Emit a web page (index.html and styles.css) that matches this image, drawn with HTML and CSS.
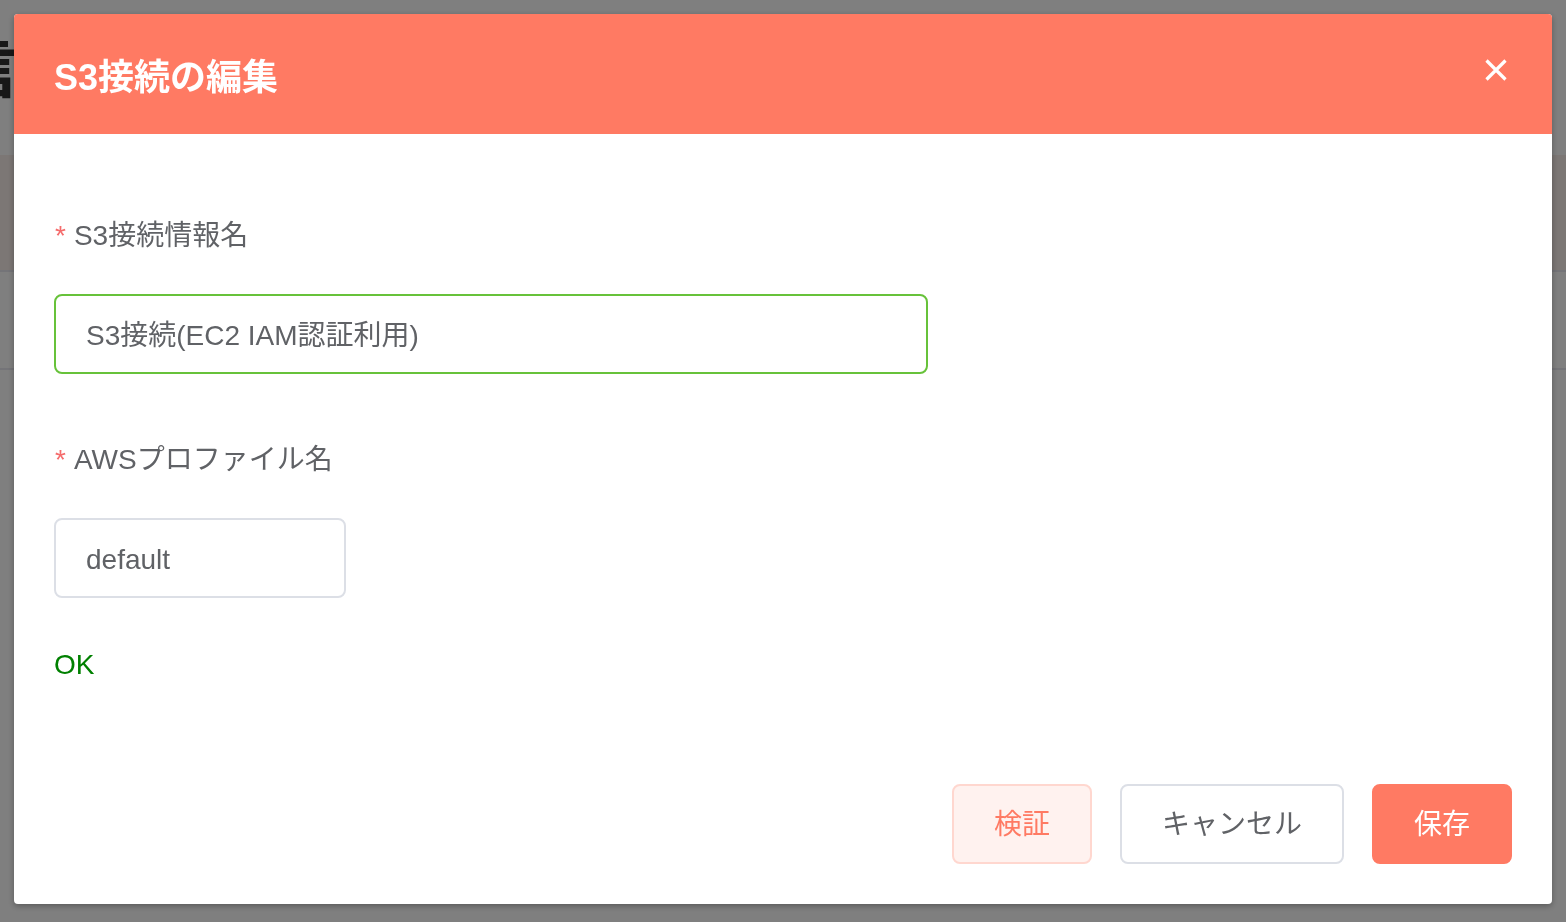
FILE: index.html
```html
<!DOCTYPE html>
<html lang="ja">
<head>
<meta charset="utf-8">
<title>S3接続の編集</title>
<link rel="stylesheet" href="styles.css">
</head>
<body>
<div class="page">
  <div class="page-top"><span class="page-glyph">言</span></div>
  <div class="page-band"></div>
  <div class="page-row"></div>
</div>
<div class="overlay">
  <div class="dialog">
    <div class="dialog-header">
      <span class="dialog-title">S3接続の編集</span>
      <button class="dialog-close" aria-label="close">
        <svg width="22" height="22" viewBox="0 0 22 22"><path d="M1.5 1.5L20.5 20.5M20.5 1.5L1.5 20.5" stroke="#fff" stroke-width="3.2" stroke-linecap="butt" fill="none"/></svg>
      </button>
    </div>
    <div class="dialog-body">
      <div class="form-item">
        <label class="form-label"><span class="req">*</span>S3接続情報名</label>
        <div class="input input-success wide">S3接続(EC2 IAM認証利用)</div>
      </div>
      <div class="form-item">
        <label class="form-label"><span class="req">*</span>AWSプロファイル名</label>
        <div class="input narrow">default</div>
      </div>
      <div class="status-ok">OK</div>
    </div>
    <div class="dialog-footer">
      <button class="btn btn-plain-primary">検証</button>
      <button class="btn btn-default">キャンセル</button>
      <button class="btn btn-primary">保存</button>
    </div>
  </div>
</div>
</body>
</html>
```

FILE: styles.css
```css
* { box-sizing: border-box; }
html, body { margin: 0; padding: 0; }
body {
  width: 1566px;
  height: 922px;
  overflow: hidden;
  background: #ffffff;
  font-family: "Liberation Sans", "Noto Sans CJK JP", sans-serif;
}
.page { width: 100%; height: 100%; }
.page-top { height: 155px; position: relative; overflow: hidden; }
.page-glyph {
  position: absolute;
  left: -42px;
  top: 24px;
  font-size: 64px;
  line-height: 80px;
  font-weight: 700;
  color: #303030;
  font-family: "Noto Sans CJK JP", sans-serif;
}
.page-band { height: 117px; background: #f8eeea; border-bottom: 2px solid #e8e8f0; }
.page-row { height: 98px; border-bottom: 2px solid #e8e8f0; }

.overlay {
  position: fixed;
  inset: 0;
  background: rgba(0, 0, 0, 0.5);
  padding: 14px;
}
.dialog {
  width: 1538px;
  height: 890px;
  background: #ffffff;
  border-radius: 4px;
  overflow: hidden;
  box-shadow: 0 2px 6px rgba(0, 0, 0, 0.3);
  display: flex;
  flex-direction: column;
  position: relative;
}
.dialog-header {
  height: 120px;
  background: #ff7a63;
  display: flex;
  align-items: center;
  padding: 8px 40px 0 40px;
  flex: none;
}
.dialog-title {
  color: #ffffff;
  font-size: 36px;
  font-weight: 700;
  line-height: 48px;
}
.dialog-close {
  position: absolute;
  top: 45px;
  right: 45px;
  width: 22px;
  height: 22px;
  padding: 0;
  border: 0;
  background: transparent;
  display: block;
}
.dialog-close svg { display: block; }
.dialog-body {
  flex: 1;
  padding: 60px 40px 0 40px;
  display: flex;
  flex-direction: column;
}
.form-item { margin-bottom: 44px; display: flex; flex-direction: column; align-items: flex-start; }
.form-label {
  font-size: 28px;
  line-height: 84px;
  height: 80px;
  color: #606266;
  padding-bottom: 20px;
  box-sizing: content-box;
  display: block;
  padding-left: 1px;
}
.req { color: #f56c6c; margin-right: 8px; }
.input {
  height: 80px;
  border: 2px solid #dcdfe6;
  border-radius: 8px;
  padding: 0 30px;
  font-size: 28px;
  line-height: 80px;
  color: #606266;
  background: #ffffff;
  overflow: hidden;
}
.input-success { border-color: #67c23a; }
.wide { width: 874px; }
.narrow { width: 292px; }
.status-ok {
  color: #008000;
  font-size: 28px;
  line-height: 46px;
}
.dialog-footer {
  flex: none;
  display: flex;
  justify-content: flex-end;
  gap: 28px;
  padding: 0 40px 40px 40px;
}
.btn {
  height: 80px;
  padding: 0 40px;
  border: 2px solid #dcdfe6;
  border-radius: 8px;
  font-size: 28px;
  font-family: "Liberation Sans", "Noto Sans CJK JP", sans-serif;
  line-height: 78px;
  background: #ffffff;
  color: #606266;
  cursor: pointer;
}
.btn-plain-primary { background: #fff2ef; border-color: #ffd7cf; color: #ff7a63; }
.btn-primary { background: #ff7a63; border-color: #ff7a63; color: #ffffff; }
```
